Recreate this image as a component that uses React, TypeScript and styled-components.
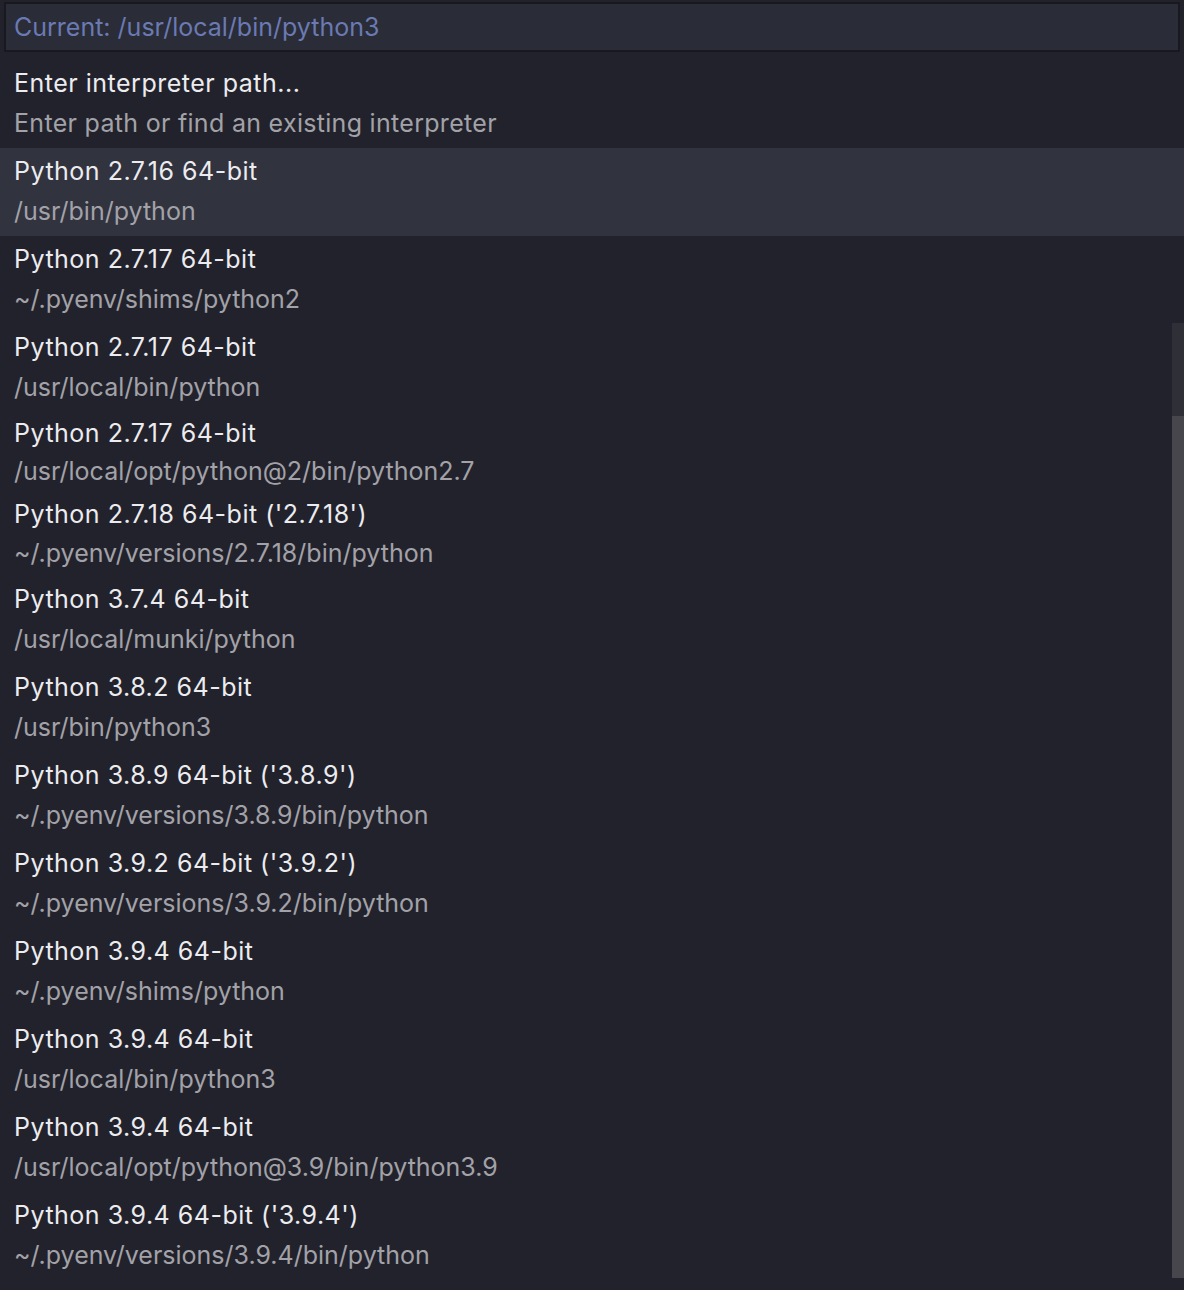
import React from "react";
import styled, { createGlobalStyle } from "styled-components";

interface Interpreter {
  label: string;
  path: string;
  height?: number;
  lineGap?: number;
}

const interpreters: Interpreter[] = [
  { label: "Python 2.7.16 64-bit", path: "/usr/bin/python" },
  { label: "Python 2.7.17 64-bit", path: "~/.pyenv/shims/python2" },
  { label: "Python 2.7.17 64-bit", path: "/usr/local/bin/python" },
  { label: "Python 2.7.17 64-bit", path: "/usr/local/opt/python@2/bin/python2.7", height: 80, lineGap: 36 },
  { label: "Python 2.7.18 64-bit ('2.7.18')", path: "~/.pyenv/versions/2.7.18/bin/python", height: 84, lineGap: 38 },
  { label: "Python 3.7.4 64-bit", path: "/usr/local/munki/python" },
  { label: "Python 3.8.2 64-bit", path: "/usr/bin/python3" },
  { label: "Python 3.8.9 64-bit ('3.8.9')", path: "~/.pyenv/versions/3.8.9/bin/python" },
  { label: "Python 3.9.2 64-bit ('3.9.2')", path: "~/.pyenv/versions/3.9.2/bin/python" },
  { label: "Python 3.9.4 64-bit", path: "~/.pyenv/shims/python" },
  { label: "Python 3.9.4 64-bit", path: "/usr/local/bin/python3" },
  { label: "Python 3.9.4 64-bit", path: "/usr/local/opt/python@3.9/bin/python3.9" },
  { label: "Python 3.9.4 64-bit ('3.9.4')", path: "~/.pyenv/versions/3.9.4/bin/python" },
];

const GlobalStyle = createGlobalStyle`
  html, body {
    margin: 0;
    padding: 0;
    background: #22222c;
  }
  body {
    font-family: Inter, "Noto Sans", sans-serif;
    -webkit-font-smoothing: antialiased;
  }
`;

const App: React.FC = () => {
  return (
    <>
      <GlobalStyle />
      <Picker>
        <InputFrame>
          <SearchInput placeholder="Current: /usr/local/bin/python3" />
        </InputFrame>
        <List>
          <Row $height={88} $gap={40}>
            <Title>Enter interpreter path...</Title>
            <Detail>Enter path or find an existing interpreter</Detail>
          </Row>
          {interpreters.map((item, i) => (
            <Row
              key={i}
              $height={item.height ?? 88}
              $gap={item.lineGap ?? 40}
              $selected={i === 0}
            >
              <Title>{item.label}</Title>
              <Detail $path>{item.path}</Detail>
            </Row>
          ))}
          <Scrollbar>
            <ScrollThumb />
          </Scrollbar>
        </List>
      </Picker>
    </>
  );
};

const Picker = styled.div`
  width: 1184px;
  height: 1290px;
  background: #22222c;
  overflow: hidden;
  display: flex;
  flex-direction: column;
`;

const InputFrame = styled.div`
  margin: 2px 4px 0 4px;
  height: 50px;
  box-sizing: border-box;
  border: 2px solid #18181f;
  background: #2a2c38;
  display: flex;
  align-items: center;
`;

const SearchInput = styled.input`
  flex: 1;
  height: 100%;
  border: none;
  outline: none;
  background: transparent;
  padding: 0 0 0 8px;
  font-family: Inter, "Noto Sans", sans-serif;
  font-size: 25px;
  color: #c8c8d0;

  &::placeholder {
    color: #6a7ab2;
  }
`;

const List = styled.div`
  position: relative;
  display: flex;
  flex-direction: column;
  margin-top: 8px;
`;

const Row = styled.div<{ $height: number; $gap: number; $selected?: boolean }>`
  height: ${(p) => p.$height}px;
  box-sizing: border-box;
  padding: 3px 0 0 14px;
  background: ${(p) => (p.$selected ? "#31333f" : "transparent")};
  display: grid;
  grid-template-rows: ${(p) => p.$gap}px 1fr;
  line-height: ${(p) => p.$gap}px;
  font-size: 25px;
  white-space: nowrap;
`;

const Title = styled.div`
  color: #ececef;
  letter-spacing: 0.5px;
`;

const Detail = styled.div<{ $path?: boolean }>`
  color: #a2a2a8;
  letter-spacing: ${(p) => (p.$path ? "0" : "0.3px")};
  line-height: 40px;
`;

const Scrollbar = styled.div`
  position: absolute;
  right: 0;
  top: 263px;
  width: 12px;
  height: 955px;
  background: #2f2f38;
  display: flex;
  flex-direction: column;
  justify-content: flex-end;
`;

const ScrollThumb = styled.div`
  height: 862px;
  background: #46464c;
`;

export default App;
